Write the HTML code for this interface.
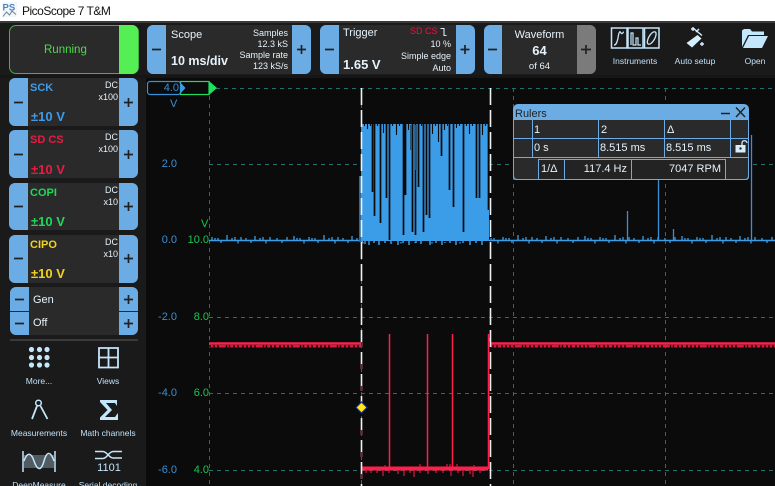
<!DOCTYPE html>
<html><head><meta charset="utf-8">
<style>
html,body{margin:0;padding:0;background:#1a1a1a}
#p{position:relative;width:775px;height:486px;overflow:hidden;background:#1a1a1a;font-family:"Liberation Sans",sans-serif;color:#e6f2fb}
#p div{position:absolute;box-sizing:border-box}
.t{position:absolute;white-space:nowrap;line-height:12px}
.r{text-align:right}
.c{text-align:center}
.s{font-size:9px}
.l{font-size:8.500px;color:#bfe2fa;width:90px;text-align:center}
svg{position:absolute;left:0;top:0}
</style></head><body>
<div id="p">
<div style="left:0;top:0;width:775px;height:21px;background:#fff"></div>
<div style="left:0;top:21px;width:775px;height:2px;background:#3a3a3a"></div>
<div style="left:146px;top:78px;width:629px;height:408px;background:#0b0b0b"></div>
<div style="left:0;top:75px;width:775px;height:3px;background:#161616"></div>

<!-- top panels -->
<div style="left:9px;top:25px;width:130px;height:49px;background:#2a2a2a;border:1.5px solid #46b044;border-radius:7px"></div>
<div style="left:119px;top:25px;width:19px;height:49px;background:#55ef55;border-radius:0 6px 6px 0"></div>
<div style="left:147px;top:25px;width:164px;height:49px;background:#2a2a2a;border-radius:6px"></div>
<div style="left:320px;top:25px;width:155px;height:49px;background:#2a2a2a;border-radius:6px"></div>
<div style="left:484px;top:25px;width:112px;height:49px;background:#2a2a2a;border-radius:6px"></div>
<div style="left:147px;top:25px;width:19px;height:49px;background:#6cace4;border-radius:6px 0 0 6px"></div>
<div style="left:292px;top:25px;width:19px;height:49px;background:#6cace4;border-radius:0 6px 6px 0"></div>
<div style="left:320px;top:25px;width:19px;height:49px;background:#6cace4;border-radius:6px 0 0 6px"></div>
<div style="left:456px;top:25px;width:19px;height:49px;background:#6cace4;border-radius:0 6px 6px 0"></div>
<div style="left:484px;top:25px;width:18px;height:49px;background:#6cace4;border-radius:6px 0 0 6px"></div>
<div style="left:577px;top:25px;width:19px;height:49px;background:#7b7b7b;border-radius:0 6px 6px 0"></div>

<!-- channel panels -->
<div style="left:9px;top:78px;width:129px;height:48px;background:#2a2a2a;border-radius:6px"></div>
<div style="left:9px;top:130px;width:129px;height:48px;background:#2a2a2a;border-radius:6px"></div>
<div style="left:9px;top:183px;width:129px;height:47px;background:#2a2a2a;border-radius:6px"></div>
<div style="left:9px;top:235px;width:129px;height:48px;background:#2a2a2a;border-radius:6px"></div>
<div style="left:10px;top:287px;width:128px;height:48px;background:#2a2a2a;border-radius:6px"></div>
<div style="left:9px;top:78px;width:19px;height:48px;background:#6cace4;border-radius:6px 0 0 6px"></div>
<div style="left:119px;top:78px;width:19px;height:48px;background:#6cace4;border-radius:0 6px 6px 0"></div>
<div style="left:9px;top:130px;width:19px;height:48px;background:#6cace4;border-radius:6px 0 0 6px"></div>
<div style="left:119px;top:130px;width:19px;height:48px;background:#6cace4;border-radius:0 6px 6px 0"></div>
<div style="left:9px;top:183px;width:19px;height:47px;background:#6cace4;border-radius:6px 0 0 6px"></div>
<div style="left:119px;top:183px;width:19px;height:47px;background:#6cace4;border-radius:0 6px 6px 0"></div>
<div style="left:9px;top:235px;width:19px;height:48px;background:#6cace4;border-radius:6px 0 0 6px"></div>
<div style="left:119px;top:235px;width:19px;height:48px;background:#6cace4;border-radius:0 6px 6px 0"></div>
<div style="left:10px;top:287px;width:19px;height:24px;background:#6cace4;border-radius:6px 0 0 0"></div>
<div style="left:10px;top:312px;width:19px;height:23px;background:#6cace4;border-radius:0 0 0 6px"></div>
<div style="left:119px;top:287px;width:19px;height:24px;background:#6cace4;border-radius:0 6px 0 0"></div>
<div style="left:119px;top:312px;width:19px;height:23px;background:#6cace4;border-radius:0 0 6px 0"></div>
<div style="left:10px;top:339px;width:128px;height:2px;background:#3a3a3a"></div>

<svg width="775" height="486" viewBox="0 0 775 486">
<defs>
<pattern id="bn" patternUnits="userSpaceOnUse" x="0" y="230" width="97" height="20">
<path d="M0 10.500H97" stroke="#3b9ce8" stroke-width="1.600" fill="none"/>
<path d="M3 10V6M6 10V8M9 10V8M13 11V13.500M18 10V7M21 10V8M24 10V8M27 11V13M33 10V5M38 10V8M41 10V7M44 11V13.500M47 10V7M52 10V8M57 11V13M61 10V6M66 10V8M69 10V7M72 11V13.500M76 10V7M83 10V8M88 11V13M93 10V7" stroke="#3b9ce8" stroke-width="1.300" fill="none"/>
</pattern>
<pattern id="rt" patternUnits="userSpaceOnUse" x="0" y="340" width="37" height="10">
<path d="M0 3.500H37" stroke="#ff1f4a" stroke-width="2.500" fill="none"/>
<rect x="0" y="5" width="37" height="2.500" fill="#d81a40"/>
<path d="M4.500 5V7.500M7.500 5V7.500M12 5V7.500M16 5V7.500M21 5V7.500M25 5V7.500M29 5V7.500M33 5V7.500" stroke="#0b0b0b" stroke-width="1.400" fill="none"/>
</pattern>
</defs>

<!-- grid -->
<g stroke="#24706e" stroke-width="1" stroke-dasharray="4 4" fill="none">
<path d="M216 88.500H775M209 164.500H775M209 240.500H775M209 317.500H775M209 393.500H775M209 470.500H775"/>
<path d="M209.500 88V486M361.500 88V486M513.500 88V486M665.500 88V486"/>
</g>

<!-- blue trace -->
<rect x="209" y="230" width="566" height="20" fill="url(#bn)"/>
<path d="M627.500 240V211M658.500 240V180M673.500 240V229M751.500 240V135" stroke="#3b8fd6" stroke-width="1.300" fill="none"/>
<rect x="361" y="124" width="128" height="118" fill="#3b9ce8"/>
<rect x="359" y="176" width="2" height="66" fill="#2a6a9e"/>
<g stroke="#0b0b0b" fill="none" stroke-width="1.700">
<path d="M372.500 123V192M374.500 123V216M380.500 123V223M386.500 123V198M389.500 123V240M403.500 123V235M404.500 123V195M405.500 123V195M412.500 123V232M415.500 123V235M418.500 123V187M423.500 123V232M426.500 123V215M429.500 123V218M441.500 123V156M449.500 123V190M453.500 123V207M463.500 123V232M476.500 123V198M479.500 123V198M488.500 123V210"/>
</g>
<g stroke="#0b0b0b" fill="none" stroke-width="1.100">
<path d="M364.500 123V126M367.500 123V129M370.500 123V126M377.500 123V126M383.500 123V133M392.500 123V126M396.500 123V135M399.500 123V126M408.500 123V130M421.500 123V126M432.500 123V134M435.500 123V126M438.500 123V142M444.500 123V130M447.500 123V126M456.500 123V128M459.500 123V126M466.500 123V126M469.500 123V134M472.500 123V126M482.500 123V135M485.500 123V126"/>
<path d="M363 241.500H489" stroke-width="1"/>
</g>
<path d="M416 125V170M411 125V150" stroke="#24557c" stroke-width="2" fill="none"/>
<path d="M365 241V244M369 241V245M374 241V243M379 241V245M385 241V243M391 241V244M398 241V245M403 241V243M409 241V245M416 241V243M421 241V244M430 241V245M436 241V243M442 241V245M450 241V243M456 241V245M463 241V243M470 241V245M476 241V243M482 241V245" stroke="#3b9ce8" stroke-width="1.500" fill="none"/>

<!-- red trace -->
<rect x="209" y="340" width="152" height="10" fill="url(#rt)"/>
<rect x="491" y="340" width="284" height="10" fill="url(#rt)"/>
<path d="M362 468.500H488" stroke="#ff1f4a" stroke-width="4" fill="none"/>
<path d="M389.500 469V334M427.500 469V334M452.500 469V334M488.500 469V334M489 338L491 343" stroke="#ff1f4a" stroke-width="1.500" fill="none"/>
<path d="M366 470V473M371 470V473M377 470V473M383 470V476M389 470V473M398 470V474M404 470V476M410 470V473M414 470V477M420 470V473M428 470V474M436 470V473M443 470V473M451 470V476M458 470V473M463 470V476M470 470V474M473 470V477M480 470V473M385 467V465M420 467V464M447 467V464M450 467V464M457 467V464M474 467V465" stroke="#e0183f" stroke-width="1.200" fill="none"/>

<!-- rulers -->
<path d="M361.500 88V486M490.500 88V486" stroke="#eef2f2" stroke-width="1.600" stroke-dasharray="17 5" fill="none"/>
<path d="M361.500 342V486" stroke="#8a1c30" stroke-width="1.600" stroke-dasharray="5 17" stroke-dashoffset="22" fill="none"/>
<path d="M361.500 402L367 407.500L361.500 413L356 407.500Z" fill="#ffe81e" stroke="#1a2b8c" stroke-width="1.200"/>

<!-- axis markers -->
<rect x="180.500" y="81.500" width="28.500" height="13" fill="#0b0b0b" stroke="#1ee05c" stroke-width="1.200"/>
<path d="M209 81L217 88L209 95Z" fill="#1ee05c"/>
<rect x="147.500" y="81.500" width="33" height="13" rx="2.500" fill="#0b0b0b" stroke="#3a8fd6" stroke-width="1.200"/>
<path d="M180 82L185.500 88L180 94Z" fill="#3a9ae0"/>

<!-- logo -->
<rect x="2" y="2" width="15" height="15" fill="#f2f7fb"/>
<text x="2.500" y="10.500" font-family="Liberation Sans" font-size="9.500" font-weight="bold" fill="#4f83c0">PS</text>
<path d="M3 16.500L6.500 12L9.500 15L12 11L16 14.500" stroke="#6b7f90" stroke-width="1" fill="none"/>

<!-- minus / plus glyphs -->
<g stroke="#222" stroke-width="1.700" fill="none">
<path d="M152 49.500H161M297 49.500H306M301.500 45V54M325 49.500H334M460.500 49.500H469.500M465 45V54M488 49.500H497M581 49.500H591M586 45V54"/>
<path d="M14 102.500H23M124 102.500H133M128.500 98V107M14 154.500H23M124 154.500H133M128.500 150V159M14 206.500H23M124 206.500H133M128.500 202V211M14 258.500H23M124 258.500H133M128.500 254V263M15 299.500H24M124 299.500H133M128.500 295V304M15 323.500H24M124 323.500H133M128.500 319V328"/>
</g>

<!-- instruments icons -->
<g stroke="#c4e6fb" fill="none">
<rect x="611.500" y="28" width="15.500" height="20" stroke-width="1.500"/>
<rect x="628" y="28" width="15" height="20" stroke-width="1.500"/>
<rect x="644.500" y="28" width="14.500" height="20" stroke-width="1.500"/>
<path d="M614 45C616 45 617 43 618 38C619 31 620 31 621 33C622 35 623 32 624 32" stroke-width="1.300"/>
<path d="M631 45V33H633V45H636V38H638V45H641" stroke-width="1.200"/>
<ellipse cx="651.700" cy="38" rx="3" ry="7" transform="rotate(30 651.700 38)" stroke-width="1.300"/>
</g>
<!-- auto setup -->
<path d="M697.500 35L701.500 38.500L692 47.500L686.500 43Z" fill="#d6effc"/>
<path d="M696 32L699 29M693 28L702 35.500M693 27V31M691 29H695M702 42V46M700 44H704" stroke="#d6effc" stroke-width="1.400" fill="none"/>
<!-- folder -->
<path d="M742 47V30.500L744 29H750L752 31.500H764V35H748L742 47Z" fill="#c4e6fb"/>
<path d="M749 36H768L762 48H743Z" fill="#c4e6fb"/>

<!-- sidebar icons -->
<g fill="#c4e6fb">
<circle cx="31.500" cy="349.500" r="2.600"/><circle cx="39.500" cy="349.500" r="2.600"/><circle cx="47" cy="349.500" r="2.600"/>
<circle cx="31.500" cy="357.500" r="2.600"/><circle cx="39.500" cy="357.500" r="2.600"/><circle cx="47" cy="357.500" r="2.600"/>
<circle cx="31.500" cy="365" r="2.600"/><circle cx="39.500" cy="365" r="2.600"/><circle cx="47" cy="365" r="2.600"/>
</g>
<path d="M99 348H118V367.500H99ZM108.500 348V367.500M99 357.500H118" stroke="#c4e6fb" stroke-width="1.800" fill="none"/>
<circle cx="38.500" cy="403" r="2.800" stroke="#c4e6fb" stroke-width="1.500" fill="none"/>
<path d="M37 406L32 419M40.500 406L47.500 419" stroke="#c4e6fb" stroke-width="1.800" fill="none"/>
<path d="M100 400H117V406L115 403H106L112 410L105 417H115L118 413V420H100V417.500L107.500 410L100 402Z" fill="#c4e6fb"/>
<!-- deepmeasure -->
<path d="M23 451V472M55 451V472" stroke="#c4e6fb" stroke-width="1.500" fill="none"/>
<rect x="24" y="455" width="30" height="13" fill="#6d7f88" opacity=".65"/>
<path d="M24 461C27 452 31 452 34 461C37 470 41 472 44 461C47 450 51 452 54 461" stroke="#c4e6fb" stroke-width="1.500" fill="none"/>
<!-- serial decoding -->
<path d="M95 451.500H103C107 451.500 109 458 113 458H122M95 458.500H103C107 458.500 109 451.500 113 451.500H122" stroke="#c4e6fb" stroke-width="1.500" fill="none"/>

<!-- trigger edge icon -->
<path d="M440.500 28.500H444V35.500H446.500" stroke="#d8e8f2" stroke-width="1.100" fill="none"/>
</svg>

<!-- Rulers window -->
<div style="left:513px;top:104px;width:236px;height:76px;background:#6cace4;border-radius:5px 5px 3px 3px"></div>
<div style="left:514px;top:119.500px;width:233.500px;height:59.500px;background:#2a2a2a;border-radius:0 0 3px 3px"></div>
<div style="left:514px;top:137.500px;width:234px;height:1px;background:#6cace4"></div>
<div style="left:514px;top:157px;width:234px;height:1px;background:#6cace4"></div>
<div style="left:531.500px;top:119px;width:1px;height:38px;background:#6cace4"></div>
<div style="left:598px;top:119px;width:1px;height:38px;background:#6cace4"></div>
<div style="left:664px;top:119px;width:1px;height:38px;background:#6cace4"></div>
<div style="left:730px;top:119px;width:1px;height:38px;background:#6cace4"></div>
<div style="left:537.500px;top:159px;width:188px;height:20px;background:#232323;border-left:1px solid #6cace4;border-right:1px solid #6cace4;border-top:1px solid #6cace4"></div>
<div style="left:564px;top:159px;width:1px;height:20px;background:#6cace4"></div>
<div style="left:631px;top:159px;width:1px;height:20px;background:#6cace4"></div>

<svg width="775" height="486" viewBox="0 0 775 486">
<path d="M721 113.500H730M736 107.500L745 117M745 107.500L736 117" stroke="#222" stroke-width="1.400" fill="none"/>
<rect x="735.500" y="145" width="10" height="7.500" fill="#d8ecfa"/>
<path d="M742 145V143C742 140 747 140 747 143" stroke="#d8ecfa" stroke-width="1.300" fill="none"/>
<circle cx="740.500" cy="148.500" r="1.200" fill="#2a2a2a"/>
</svg>

<span class="t" style="left:515px;top:108px;font-size:11px;color:#222">Rulers</span>
<span class="t" style="left:534px;top:124px;font-size:11px">1</span>
<span class="t" style="left:601px;top:124px;font-size:11px">2</span>
<span class="t" style="left:667px;top:124px;font-size:11px">Δ</span>
<span class="t" style="left:534px;top:142px;font-size:11px">0 s</span>
<span class="t" style="left:600px;top:142px;font-size:11px">8.515 ms</span>
<span class="t" style="left:666px;top:142px;font-size:11px">8.515 ms</span>
<span class="t" style="left:541px;top:163px;font-size:11px">1/Δ</span>
<span class="t r" style="right:148px;top:163px;font-size:11px">117.4 Hz</span>
<span class="t r" style="right:54px;top:163px;font-size:11px">7047 RPM</span>

<!-- text -->
<span class="t" style="left:22px;top:5px;font-size:12px;letter-spacing:-.5px;color:#111">PicoScope 7 T&amp;M</span>
<span class="t" style="left:44px;top:44px;font-size:11.500px;color:#4fd84f">Running</span>

<span class="t" style="left:171px;top:29px;font-size:11px">Scope</span>
<span class="t" style="left:171px;top:55px;font-size:12.500px;font-weight:bold">10 ms/div</span>
<span class="t r s" style="right:487px;top:27px">Samples</span>
<span class="t r s" style="right:487px;top:38px">12.3 kS</span>
<span class="t r s" style="right:487px;top:49px">Sample rate</span>
<span class="t r s" style="right:487px;top:60px">123 kS/s</span>

<span class="t" style="left:343px;top:27px;font-size:11px">Trigger</span>
<span class="t" style="left:343px;top:59px;font-size:13px;font-weight:bold">1.65 V</span>
<span class="t" style="left:410px;top:25px;font-size:9px;color:#e5163f">SD CS</span>
<span class="t r s" style="right:324px;top:38px">10 %</span>
<span class="t r s" style="right:324px;top:50px">Simple edge</span>
<span class="t r s" style="right:324px;top:62px">Auto</span>

<span class="t c" style="left:502px;width:75px;top:29px;font-size:11px">Waveform</span>
<span class="t c" style="left:502px;width:75px;top:45px;font-size:13px;font-weight:bold">64</span>
<span class="t c" style="left:502px;width:75px;top:61px;font-size:9.500px">of 64</span>

<span class="t l" style="left:590px;top:55px">Instruments</span>
<span class="t l" style="left:650px;top:55px">Auto setup</span>
<span class="t l" style="left:710px;top:55px">Open</span>

<span class="t" style="left:30px;top:82px;font-size:11px;font-weight:bold;color:#3f9be8">SCK</span>
<span class="t" style="left:31px;top:111px;font-size:13px;font-weight:bold;color:#3f9be8">±10 V</span>
<span class="t r s" style="right:657px;top:79px">DC</span>
<span class="t r s" style="right:657px;top:91px">x100</span>

<span class="t" style="left:30px;top:134px;font-size:11px;font-weight:bold;color:#ea1b43">SD CS</span>
<span class="t" style="left:31px;top:164px;font-size:13px;font-weight:bold;color:#ea1b43">±10 V</span>
<span class="t r s" style="right:657px;top:131px">DC</span>
<span class="t r s" style="right:657px;top:143px">x100</span>

<span class="t" style="left:30px;top:187px;font-size:11px;font-weight:bold;color:#1ed85a">COPI</span>
<span class="t" style="left:31px;top:216px;font-size:13px;font-weight:bold;color:#1ed85a">±10 V</span>
<span class="t r s" style="right:657px;top:184px">DC</span>
<span class="t r s" style="right:657px;top:196px">x10</span>

<span class="t" style="left:30px;top:239px;font-size:11px;font-weight:bold;color:#f2d21e">CIPO</span>
<span class="t" style="left:31px;top:268px;font-size:13px;font-weight:bold;color:#f2d21e">±10 V</span>
<span class="t r s" style="right:657px;top:236px">DC</span>
<span class="t r s" style="right:657px;top:248px">x10</span>

<span class="t" style="left:33px;top:294px;font-size:11px">Gen</span>
<span class="t" style="left:33px;top:317px;font-size:11px">Off</span>

<span class="t l" style="left:-6px;top:375px">More...</span>
<span class="t l" style="left:63px;top:375px">Views</span>
<span class="t l" style="left:-6px;top:427px">Measurements</span>
<span class="t l" style="left:63px;top:427px">Math channels</span>
<span class="t l" style="left:-6px;top:479px">DeepMeasure</span>
<span class="t l" style="left:63px;top:479px">Serial decoding</span>
<span class="t c" style="left:94px;width:30px;top:462px;font-size:11px;color:#c4e6fb">1101</span>

<!-- axis labels -->
<span class="t r" style="right:596px;top:82px;font-size:11px;color:#3a8fd6">4.0</span>
<span class="t" style="left:170px;top:98px;font-size:11px;color:#3a8fd6">V</span>
<span class="t r" style="right:598px;top:158px;font-size:11px;color:#3a8fd6">2.0</span>
<span class="t r" style="right:598px;top:234px;font-size:11px;color:#3a8fd6">0.0</span>
<span class="t r" style="right:598px;top:311px;font-size:11px;color:#3a8fd6">-2.0</span>
<span class="t r" style="right:598px;top:387px;font-size:11px;color:#3a8fd6">-4.0</span>
<span class="t r" style="right:598px;top:464px;font-size:11px;color:#3a8fd6">-6.0</span>
<span class="t" style="left:201px;top:218px;font-size:11px;color:#17c850">V</span>
<span class="t r" style="right:566px;top:234px;font-size:11px;color:#17c850">10.0</span>
<span class="t r" style="right:566px;top:311px;font-size:11px;color:#17c850">8.0</span>
<span class="t r" style="right:566px;top:387px;font-size:11px;color:#17c850">6.0</span>
<span class="t r" style="right:566px;top:464px;font-size:11px;color:#17c850">4.0</span>
</div>
</body></html>
